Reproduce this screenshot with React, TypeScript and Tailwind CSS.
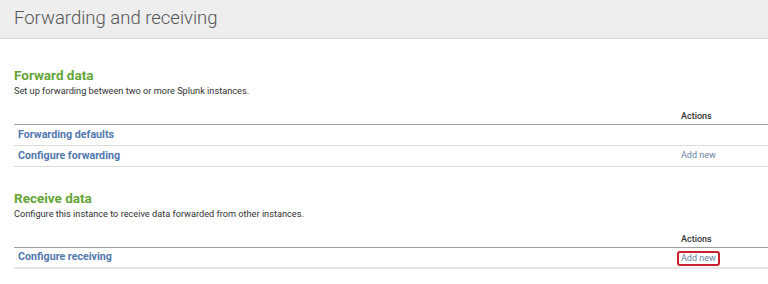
const font = { fontFamily: "Roboto, 'Noto Sans', sans-serif" };

type Row = { name: string; action?: string; highlight?: boolean };

function Section({
  title,
  description,
  rows,
  last,
}: {
  title: string;
  description: string;
  rows: Row[];
  last?: boolean;
}) {
  return (
    <section className="flex flex-col">
      <h2 className="text-[13.5px] font-bold leading-[18px] text-[#65a637]">{title}</h2>
      <p className="text-[9.2px] leading-[14px] text-[#333]">{description}</p>
      <div className="mt-[11px] flex h-[16px] items-center border-b border-[#a0a0a0]">
        <div className="flex-1" />
        <div className="w-[87px] text-[9px] font-medium text-[#333]">Actions</div>
      </div>
      {rows.map((row, i) => (
        <div
          key={row.name}
          className={`flex h-[21px] items-center ${
            last && i === rows.length - 1
              ? "border-b-2 border-[#e6e6e6]"
              : "border-b border-[#dcdcdc]"
          }`}
        >
          <a className="flex-1 pl-[4px] text-[10.7px] font-bold text-[#5379af]">{row.name}</a>
          <div className="flex w-[87px] items-center">
            {row.action && (
              <a
                className={`block text-[9px] leading-[11px] text-[#6a82a3] ${
                  row.highlight
                    ? "-mb-[1px] -ml-[4px] rounded-[3px] border-2 border-[#c8202f] px-[2px]"
                    : "-mt-[2px]"
                }`}
              >
                {row.action}
              </a>
            )}
          </div>
        </div>
      ))}
    </section>
  );
}

export default function App() {
  return (
    <div className="h-[284px] w-[768px] overflow-hidden bg-white" style={font}>
      <header className="flex h-[39px] items-center border-b border-[#d5d5d5] bg-[#eeeeee] px-[14px]">
        <h1 className="text-[18.5px] font-light text-[#555]">Forwarding and receiving</h1>
      </header>
      <main className="flex flex-col gap-[22px] pl-[14px] pt-[27px]">
        <Section
          title="Forward data"
          description="Set up forwarding between two or more Splunk instances."
          rows={[
            { name: "Forwarding defaults" },
            { name: "Configure forwarding", action: "Add new" },
          ]}
        />
        <Section
          title="Receive data"
          description="Configure this instance to receive data forwarded from other instances."
          rows={[{ name: "Configure receiving", action: "Add new", highlight: true }]}
          last
        />
      </main>
    </div>
  );
}
